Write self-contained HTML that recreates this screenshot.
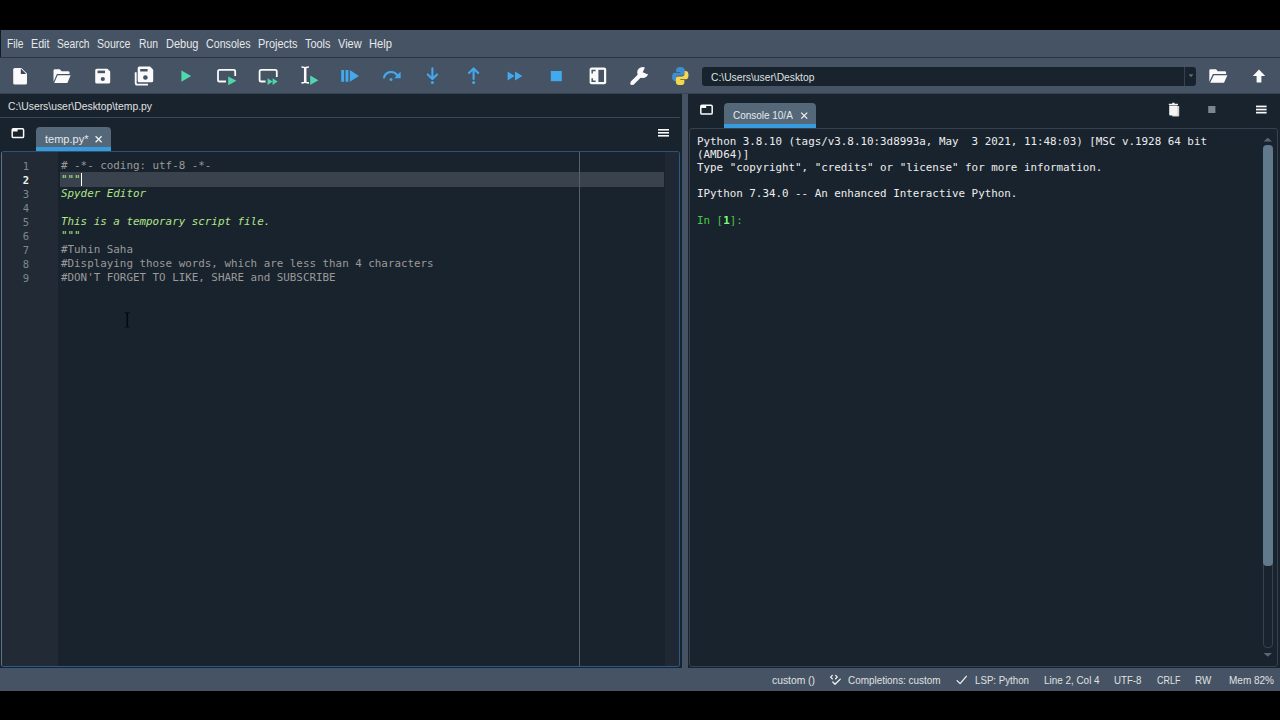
<!DOCTYPE html>
<html lang="en">
<head>
<meta charset="utf-8">
<title>Spyder (Python 3.8)</title>
<style>
html,body{margin:0;padding:0;background:#000;}
body{width:1280px;height:720px;position:relative;overflow:hidden;font-family:"Liberation Sans",sans-serif;color:#e0e1e3;}
.abs{position:absolute;}
#win{position:absolute;left:0;top:30px;width:1280px;height:661px;background:#455364;}
/* menubar */
#menubar{position:absolute;left:0;top:0;width:1280px;height:27px;background:#455364;}
#menubar span{position:absolute;top:7px;font-size:12px;line-height:15px;color:#e6e8ea;white-space:nowrap;transform-origin:0 50%;}
#sep1{position:absolute;left:0;top:27px;width:1280px;height:1px;background:#2a3542;}
#toolbar{position:absolute;left:0;top:28px;width:1280px;height:35px;background:#455364;}
#toolbar svg{position:absolute;overflow:visible;}
#combo{position:absolute;left:702px;top:9px;width:494px;height:19px;background:#19232d;border-radius:3px;}
#combo .txt{position:absolute;left:9px;top:3px;font-size:11px;line-height:15px;color:#dfe1e2;white-space:nowrap;transform-origin:0 50%;}
#combo .div{position:absolute;left:482px;top:0;width:1px;height:19px;background:#37414f;}
/* panels */
#left{position:absolute;left:0;top:63px;width:682px;height:575px;background:#19232d;}
#right{position:absolute;left:688px;top:63px;width:592px;height:575px;background:#19232d;}
#status{position:absolute;left:0;top:638px;width:1280px;height:23px;background:#455364;}
#status span{position:absolute;top:5px;font-size:11px;line-height:15px;color:#e0e1e3;white-space:nowrap;transform-origin:0 50%;}
.mono{font-family:"DejaVu Sans Mono","Liberation Mono",monospace;}
/* editor */
#fpath{position:absolute;left:8px;top:6px;font-size:11px;line-height:15px;color:#e0e1e3;white-space:nowrap;transform-origin:0 50%;}
#lline{position:absolute;left:0;top:24px;width:680px;height:1px;background:#3c4856;}
#tab1{position:absolute;left:36px;top:34px;width:75px;height:24px;background:#54687a;border-radius:4px 4px 0 0;border-bottom:4px solid #389cdc;box-sizing:border-box;}
#tab1 .t{position:absolute;left:9px;top:4.5px;font-size:11px;line-height:15px;color:#e6e8ea;white-space:nowrap;transform-origin:0 50%;}
#editor{position:absolute;left:1px;top:58px;width:679px;height:516px;box-sizing:border-box;border:1px solid #275d8c;border-left-color:#5e7388;border-top-color:#2b5273;border-radius:3px;background:#19232d;overflow:hidden;}
#gutter{position:absolute;left:0;top:0;width:56px;height:100%;background:#222b35;}
#flag{position:absolute;left:663px;top:0;width:14px;height:100%;background:#202933;}
#edge{position:absolute;left:577px;top:0;width:1px;height:100%;background:#56606b;}
#curline{position:absolute;left:58px;top:19.5px;width:604px;height:15px;background:#3a424d;}
.ln{position:absolute;left:0;width:27px;text-align:right;font-size:10.5px;line-height:14px;color:#7d8791;}
.ln.cur{color:#f0f0f0;font-weight:bold;}
.cl{position:absolute;left:59px;font-size:10.86px;line-height:14px;white-space:pre;color:#9a9a9a;}
.cl.s{color:#b0e686;font-style:italic;}
#caret{position:absolute;left:79px;top:20.5px;width:1px;height:13px;background:#fff;}
/* console */
#tab2{position:absolute;left:36px;top:10px;width:92px;height:25px;background:#54687a;border-radius:4px 4px 0 0;border-bottom:4px solid #389cdc;box-sizing:border-box;}
#tab2 .t{position:absolute;left:9px;top:5px;font-size:11px;line-height:15px;color:#e6e8ea;white-space:nowrap;transform-origin:0 50%;}
#console{position:absolute;left:1px;top:35px;width:589px;height:539px;box-sizing:border-box;border:1px solid #37414f;border-radius:3px;background:#19232d;overflow:hidden;}
.co{position:absolute;left:7px;font-size:10.86px;line-height:13px;white-space:pre;color:#ededed;}
.co.g{color:#45c945;}
.co.g b{color:#7aff7a;}
#sbtrack{position:absolute;left:573px;top:16px;width:10px;height:503px;box-sizing:border-box;border:1px solid #37414f;border-radius:4px;background:#19232d;}
#sbhandle{position:absolute;left:573px;top:16px;width:10px;height:421px;background:#60798b;border-radius:4px;}
</style>
</head>
<body>
<div id="win">
  <div id="menubar"><div class="abs" style="left:0;top:0;width:1px;height:27px;background:#141b24"></div>
    <span style="left:7px;transform:scaleX(0.853)">File</span>
    <span style="left:31px;transform:scaleX(0.894)">Edit</span>
    <span style="left:57px;transform:scaleX(0.855)">Search</span>
    <span style="left:97px;transform:scaleX(0.881)">Source</span>
    <span style="left:139px;transform:scaleX(0.863)">Run</span>
    <span style="left:166px;transform:scaleX(0.919)">Debug</span>
    <span style="left:206px;transform:scaleX(0.889)">Consoles</span>
    <span style="left:258px;transform:scaleX(0.911)">Projects</span>
    <span style="left:305px;transform:scaleX(0.910)">Tools</span>
    <span style="left:338px;transform:scaleX(0.915)">View</span>
    <span style="left:369px;transform:scaleX(0.932)">Help</span>
  </div>
  <div id="sep1"></div>
  <div id="toolbar">
    <!--ICONS-->
    <div id="combo"><div class="txt" style="transform:scaleX(0.934)">C:\Users\user\Desktop</div><div class="div"></div></div>
  </div>

  <div class="abs" style="left:0;top:63px;width:1280px;height:1px;background:#364352;z-index:3"></div>
  <div id="left">
    <div id="fpath" style="transform:scaleX(0.942)">C:\Users\user\Desktop\temp.py</div>
    <div id="lline"></div>
    <!--LEFTICONS-->
    <div id="tab1"><div class="t">temp.py*</div></div>
    <div id="editor">
      <div id="gutter"></div>
      <div id="flag"></div>
      <div id="curline"></div>
      <div id="edge"></div>
      <div class="ln mono" style="top:6.50px">1</div>
      <div class="ln mono cur" style="top:20.55px">2</div>
      <div class="ln mono" style="top:34.60px">3</div>
      <div class="ln mono" style="top:48.65px">4</div>
      <div class="ln mono" style="top:62.70px">5</div>
      <div class="ln mono" style="top:76.75px">6</div>
      <div class="ln mono" style="top:90.80px">7</div>
      <div class="ln mono" style="top:104.85px">8</div>
      <div class="ln mono" style="top:118.90px">9</div>
      <div class="cl mono" style="top:6.50px"># -*- coding: utf-8 -*-</div>
      <div class="cl mono s" style="top:20.55px">"""</div>
      <div class="cl mono s" style="top:34.60px">Spyder Editor</div>
      <div class="cl mono s" style="top:62.70px">This is a temporary script file.</div>
      <div class="cl mono s" style="top:76.75px">"""</div>
      <div class="cl mono" style="top:90.80px">#Tuhin Saha</div>
      <div class="cl mono" style="top:104.85px">#Displaying those words, which are less than 4 characters</div>
      <div class="cl mono" style="top:118.90px">#DON'T FORGET TO LIKE, SHARE and SUBSCRIBE</div>
      <div id="caret"></div>
    </div>
  </div>

  <div id="right">
    <!--RIGHTICONS-->
    <div id="tab2"><div class="t" style="transform:scaleX(0.905)">Console 10/A</div></div>
    <div id="console">
      <div class="co mono" style="top:5.70px">Python 3.8.10 (tags/v3.8.10:3d8993a, May  3 2021, 11:48:03) [MSC v.1928 64 bit</div>
      <div class="co mono" style="top:18.85px">(AMD64)]</div>
      <div class="co mono" style="top:32.00px">Type "copyright", "credits" or "license" for more information.</div>
      <div class="co mono" style="top:58.30px">IPython 7.34.0 -- An enhanced Interactive Python.</div>
      <div class="co mono g" style="top:84.60px">In [<b>1</b>]:</div>
      <div id="sbtrack"></div>
      <div id="sbhandle"></div>
    </div>
  </div>

  <div id="status">
    <span style="left:772px;transform:scaleX(0.938)">custom ()</span>
    <span style="left:848px;transform:scaleX(0.901)">Completions: custom</span>
    <span style="left:975px;transform:scaleX(0.883)">LSP: Python</span>
    <span style="left:1044px;transform:scaleX(0.900)">Line 2, Col 4</span>
    <span style="left:1114px;transform:scaleX(0.882)">UTF-8</span>
    <span style="left:1157px;transform:scaleX(0.814)">CRLF</span>
    <span style="left:1195px;transform:scaleX(0.893)">RW</span>
    <span style="left:1229px;transform:scaleX(0.909)">Mem 82%</span>
  </div>
</div>
<svg id="icons" class="abs" style="left:0;top:0;pointer-events:none" width="1280" height="720" viewBox="0 0 1280 720">
<g fill="#fafafa" stroke="none">
<!-- new file -->
<path d="M14.8 67.9 h6.6 l5.6 5.6 v9.5 a1.6 1.6 0 0 1 -1.6 1.6 h-10.600 a1.6 1.6 0 0 1 -1.6 -1.6 v-13.5 a1.6 1.6 0 0 1 1.6 -1.6z"/>
<path d="M20.8 68.6 v5.4 h5.4z" fill="#3a4656"/>
<!-- open folder -->
<path d="M54.6 69.3 h5.2 l1.8 1.9 h6.6 a1.3 1.3 0 0 1 1.3 1.3 v1.6 h-12.6 l-3.4 7.6 v-11.1 a1.3 1.3 0 0 1 1.1 -1.3z"/>
<path d="M57.6 75.3 h13 l-3.2 7.6 h-13.2z"/>
<!-- save -->
<path d="M96.8 68.7 h10.6 l2.8 2.8 v10.5 a1.6 1.6 0 0 1 -1.6 1.6 h-11.8 a1.6 1.6 0 0 1 -1.6 -1.6 v-11.7 a1.6 1.6 0 0 1 1.6 -1.6z"/>
<rect x="97.6" y="70.6" width="7.4" height="2.6" fill="#455364"/>
<circle cx="102.8" cy="79" r="2.1" fill="#455364"/>
<!-- save all -->
<path d="M135.700 72.200 v10.800 a1.6 1.6 0 0 0 1.6 1.6 h10.700" fill="none" stroke="#fafafa" stroke-width="1.9"/>
<path d="M139.300 66.600 h10.800 l3.100 3.100 v11 a1.6 1.6 0 0 1 -1.6 1.6 h-12.300 a1.6 1.6 0 0 1 -1.6 -1.6 v-12.500 a1.6 1.6 0 0 1 1.6 -1.6z"/>
<rect x="140.200" y="69" width="7.400" height="2.500" fill="#455364"/>
<circle cx="145.400" cy="77.500" r="2.300" fill="#455364"/>
</g>
<!-- run -->
<g fill="#4fd8ab">
<path d="M181.4 70.4 l9.8 5.7 l-9.8 5.7z"/>
<path d="M228.2 76.4 l8.2 4.4 l-8.2 4.4z"/>
<path d="M267.6 78.2 l5 3.4 l-5 3.4z M272.6 78.2 l5 3.4 l-5 3.4z"/>
<path d="M310.2 75.6 l8.2 4.7 l-8.2 4.7z"/>
</g>
<g fill="none" stroke="#fafafa" stroke-width="1.8" stroke-linejoin="round" stroke-linecap="butt">
<path d="M226 81.5 h-6.4 a1.6 1.6 0 0 1 -1.6 -1.6 v-8.4 a1.6 1.6 0 0 1 1.6 -1.6 h14 a1.6 1.6 0 0 1 1.6 1.6 v4.6"/>
<path d="M265.6 81.5 h-4.4 a1.6 1.6 0 0 1 -1.6 -1.6 v-8.4 a1.6 1.6 0 0 1 1.6 -1.6 h14 a1.6 1.6 0 0 1 1.6 1.6 v5.4"/>
<path d="M301.4 67 c2 0 3.6 0.3 3.8 1.2 c0.2 -0.9 1.8 -1.2 3.8 -1.2 M301.4 82.8 c2 0 3.6 -0.3 3.8 -1.2 c0.2 0.9 1.8 1.2 3.8 1.2 " stroke-width="1.7"/>
<path d="M305.2 67.600 v14.600" stroke-width="2.500"/>
</g>
<!-- debug -->
<g fill="#43a9ee">
<rect x="341.200" y="70" width="2.900" height="11.800"/>
<rect x="345.500" y="70" width="2.900" height="11.800"/>
<path d="M349.800 70 l9.200 5.900 l-9.200 5.900z"/>
<path d="M507.6 71.6 l7 4.5 l-7 4.5z M515 71.6 l7.4 4.5 l-7.4 4.5z"/>
<rect x="550.8" y="71" width="11" height="10.2"/>
<circle cx="391" cy="79.4" r="1.5"/>
<circle cx="432.4" cy="82.4" r="1.5"/>
<circle cx="473.6" cy="82.4" r="1.5"/>
<path d="M400.6 71.6 v6.6 h-6.4z"/>
</g>
<g fill="none" stroke="#43a9ee" stroke-width="2.1" stroke-linecap="round" stroke-linejoin="round">
<path d="M384 77.6 a7.4 7.4 0 0 1 13.4 -2.2"/>
<path d="M432.4 68.2 v10.4 M427.8 74.4 l4.6 4.6 l4.6 -4.6"/>
<path d="M473.6 68.8 v10.2 M469 73 l4.6 -4.6 l4.6 4.6"/>
</g>
<!-- maximize pane -->
<g>
<rect x="589.6" y="67.6" width="16.6" height="16.6" rx="2" fill="#fafafa"/>
<rect x="598.4" y="69.8" width="5.6" height="12.2" fill="#455364"/>
<path d="M595.6 70.6 h-3.4 v3 M595.6 81.2 h-3.4 v-3" fill="none" stroke="#455364" stroke-width="1.5"/>
</g>
<!-- wrench -->
<g>
<path d="M631.800 83.600 l9.400 -9.400" stroke="#fafafa" stroke-width="4.200" stroke-linecap="butt" fill="none"/>
<circle cx="631.900" cy="83.500" r="1.600" fill="#fafafa"/>
<circle cx="642.700" cy="72.500" r="5.500" fill="#fafafa"/>
<path d="M643 72.200 l5.800 -7.200 l3.400 5.600 l-5 3.600z" fill="#455364"/>
<path d="M642.600 72.400 l2.800 -5.800 l3.200 2.600z" fill="#455364"/>
</g>
<!-- python -->
<g transform="translate(680.300 76) scale(0.890 1.030) translate(-680.400 -76.800)">
<path d="M680.2 68 c-3 0 -4.4 1 -4.4 2.800 v2 h4.600 v0.800 h-6.400 c-1.800 0 -2.800 1.600 -2.800 4 c0 2.400 1 4 2.800 4 h1.600 v-2.400 c0 -1.800 1.400 -3 3 -3 h4.400 c1.400 0 2.400 -1 2.400 -2.400 v-3 c0 -1.800 -1.800 -2.800 -5.200 -2.800z" fill="#3f8fd0"/>
<path d="M680.6 85.600 c3 0 4.400 -1 4.400 -2.800 v-2 h-4.600 v-0.800 h6.400 c1.800 0 2.800 -1.600 2.800 -4 c0 -2.400 -1 -4 -2.800 -4 h-1.600 v2.400 c0 1.800 -1.400 3 -3 3 h-4.400 c-1.400 0 -2.400 1 -2.400 2.400 v3 c0 1.800 1.800 2.800 5.200 2.800z" fill="#f5d74e"/>
</g>
<!-- combo arrow -->
<path d="M1188.600 74.200 h4.800 l-2.400 3z" fill="#5d6a78"/>
<!-- folder right -->
<g fill="#fafafa">
<path d="M1210.600 69.300 h5.400 l1.800 1.900 h7 a1.300 1.300 0 0 1 1.300 1.300 v1.600 h-13.200 l-3.600 7.600 v-11.100 a1.300 1.300 0 0 1 1.300 -1.300z"/>
<path d="M1213.800 75.300 h13.600 l-3.400 7.400 h-13.800z"/>
<path d="M1259 69.400 l6.200 6.600 h-3.800 v6.400 h-4.800 v-6.400 h-3.800z"/>
</g>
<!-- browse tabs icons -->
<g fill="none" stroke="#fafafa" stroke-width="1.500">
<rect x="12.200" y="128.800" width="11.400" height="8.800" rx="1.200"/>
<rect x="700.800" y="105.300" width="11.400" height="8.800" rx="1.200"/>
</g>
<path d="M12.200 128.800 h5.400 v2.600 h-5.400z M700.800 105.300 h5.400 v2.600 h-5.400z" fill="#fafafa"/>
<!-- hamburger -->
<g fill="#fafafa">
<rect x="658" y="129" width="11" height="1.600"/><rect x="658" y="132" width="11" height="1.600"/><rect x="658" y="135" width="11" height="1.600"/>
<rect x="1256" y="105.600" width="10.600" height="1.700"/><rect x="1256" y="108.700" width="10.600" height="1.700"/><rect x="1256" y="111.800" width="10.600" height="1.700"/>
</g>
<!-- tab close x -->
<g fill="none" stroke="#f0f0f0" stroke-width="1.300">
<path d="M95.600 136.200 l6 6 M101.600 136.200 l-6 6"/>
<path d="M801.200 112.600 l6 6 M807.200 112.600 l-6 6"/>
</g>
<!-- console trash / stop -->
<g>
<path d="M1172.400 106 h6.800 v9.600 a1 1 0 0 1 -1 1 h-5.800z" fill="#d0d0d0"/>
<path d="M1168.800 103.700 h3.400 v-1 h2.400 v1 h3.400 v1.300 h-9.200z M1169.200 105.600 h8.200 v8.800 a1 1 0 0 1 -1 1 h-6.200 a1 1 0 0 1 -1 -1z" fill="#f4f4f4"/>
<rect x="1208.200" y="106" width="7.200" height="7" fill="#7d868d"/>
</g>
<!-- scrollbar arrows -->
<path d="M1263.600 141.600 l4.200 -3.800 l4.200 3.800z M1263.600 653 h8.400 l-4.200 3.800z" fill="#54687a"/>
<!-- mouse I-beam -->
<path d="M124.600 312.600 h2 l0.700 0.600 l0.700 -0.600 h2 M124.600 327 h2 l0.700 -0.600 l0.700 0.600 h2" fill="none" stroke="#0c1116" stroke-width="1.100"/>
<path d="M127.300 313 v13.600" fill="none" stroke="#05080c" stroke-width="1.500"/>
<!-- status icons -->
<g fill="none" stroke="#f0f0f0" stroke-width="1.300" stroke-linecap="round" stroke-linejoin="round">
<path d="M832.300 675.400 l-1.700 1.700 l1.700 1.700 M835.600 675.400 l1.700 1.700 l-1.700 1.700 M832.800 682 l2.200 2.200 l5.200 -5"/>
<path d="M957.100 680.600 l3 3 l6.200 -7.300"/>
</g>
</svg>
</body>
</html>
